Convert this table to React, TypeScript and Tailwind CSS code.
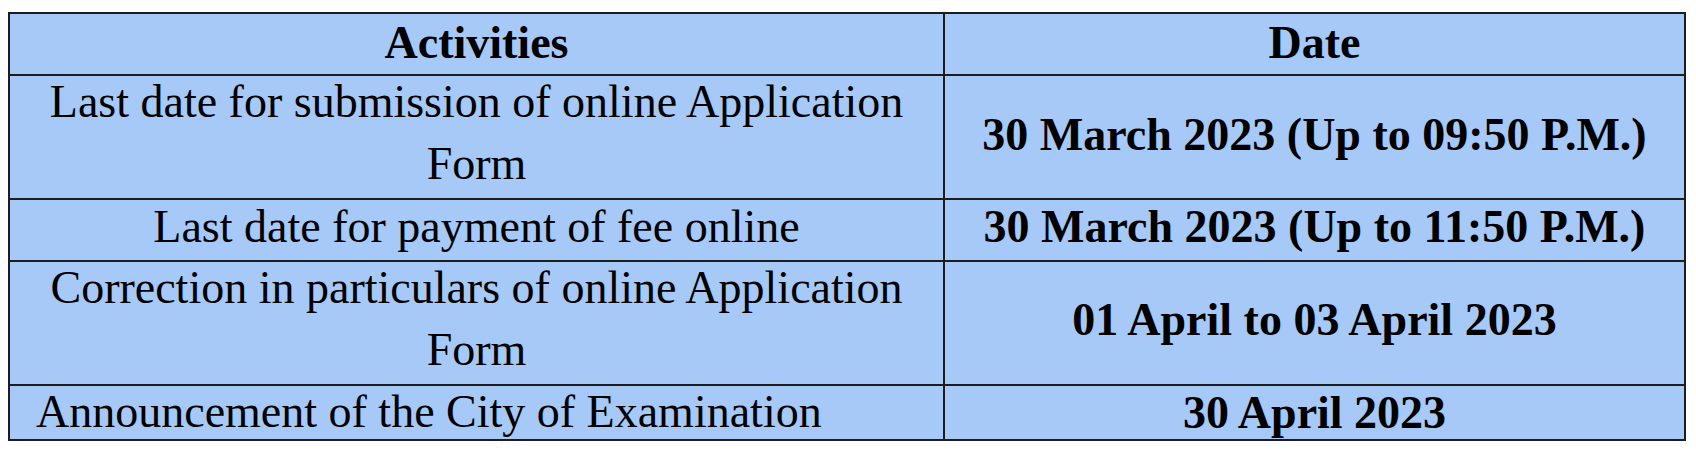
import React from 'react';

type Row = {
  activity: React.ReactNode;
  date: string;
  height: string;
  twoLine?: boolean;
  alignLeft?: boolean;
  dateShift: string;
  activityShift: string;
};

const rows: Row[] = [
  {
    activity: (
      <>
        Last date for submission of online Application
        <br />
        Form
      </>
    ),
    date: '30 March 2023 (Up to 09:50 P.M.)',
    height: 'h-[124px]',
    twoLine: true,
    dateShift: 'pb-[5px]',
    activityShift: '-mt-[8px]',
  },
  {
    activity: 'Last date for payment of fee online',
    date: '30 March 2023 (Up to 11:50 P.M.)',
    height: 'h-[62px]',
    dateShift: 'pb-[6px]',
    activityShift: 'pb-[6px]',
  },
  {
    activity: (
      <>
        Correction in particulars of online Application
        <br />
        Form
      </>
    ),
    date: '01 April to 03 April 2023',
    height: 'h-[124px]',
    twoLine: true,
    dateShift: 'pb-[7px]',
    activityShift: '-mt-[8px]',
  },
  {
    activity: 'Announcement of the City of Examination',
    date: '30 April 2023',
    height: 'h-[55px]',
    alignLeft: true,
    dateShift: 'pb-0',
    activityShift: 'pb-[2px]',
  },
];

const cell = 'border-2 border-[#1d1d1d] p-0 align-middle';

export default function App() {
  return (
    <div className="min-h-[450px] bg-white pt-[12px] pl-[8px] font-['Liberation_Serif','Times_New_Roman',serif] text-black">
      <table className="w-[1676px] table-fixed border-collapse bg-[#a6c9f8] text-[46px]">
        <colgroup>
          <col className="w-[935px]" />
          <col className="w-[741px]" />
        </colgroup>
        <thead>
          <tr className="h-[62px]">
            <th className={`${cell} text-center font-bold`}>
              <div className="pb-[3px] leading-[46px]">Activities</div>
            </th>
            <th className={`${cell} text-center font-bold`}>
              <div className="pb-[3px] leading-[46px]">Date</div>
            </th>
          </tr>
        </thead>
        <tbody>
          {rows.map((row, i) => (
            <tr key={i} className={row.height}>
              <td className={`${cell} ${row.alignLeft ? 'pl-[26px] text-left' : 'text-center'}`}>
                <div className={`${row.twoLine ? 'leading-[62px]' : 'leading-[46px]'} ${row.activityShift}`}>
                  {row.activity}
                </div>
              </td>
              <td className={`${cell} text-center font-bold`}>
                <div className={`leading-[46px] ${row.dateShift}`}>{row.date}</div>
              </td>
            </tr>
          ))}
        </tbody>
      </table>
    </div>
  );
}
